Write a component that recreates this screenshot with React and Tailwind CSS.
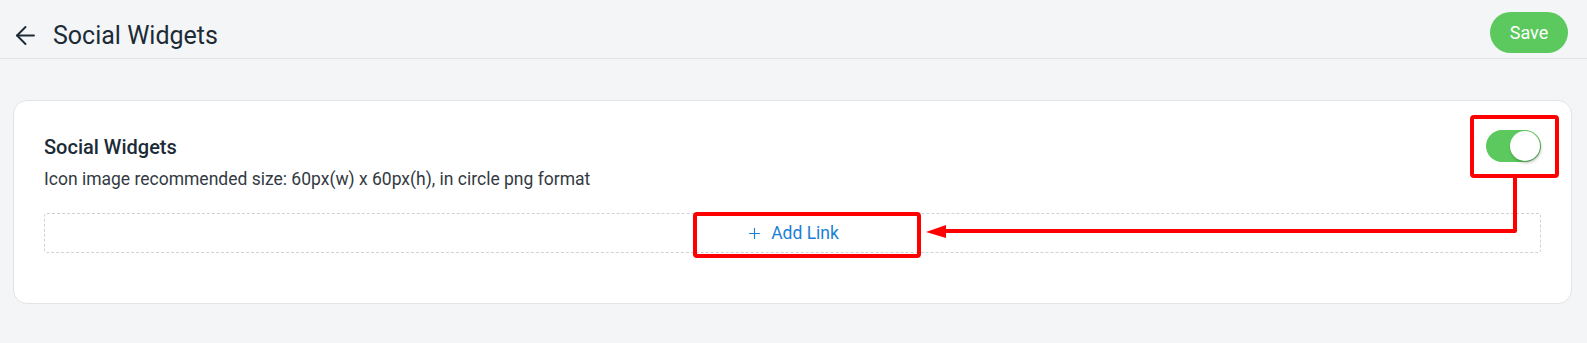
import { ArrowLeft, Plus } from 'lucide-react';

function Toggle({ on = true }) {
  return (
    <button
      className={`relative -mt-[5px] h-[32px] w-[55px] rounded-full ${on ? 'bg-[#5bc95d]' : 'bg-gray-300'}`}
    >
      <span className="absolute right-[1px] top-[1px] h-[30px] w-[30px] rounded-full bg-white shadow-[1px_2px_3px_rgba(0,0,0,0.25)]" />
    </button>
  );
}

export default function App() {
  return (
    <div
      className="relative h-[343px] w-full overflow-hidden bg-[#f4f5f7] text-[#1c2b36]"
      style={{ fontFamily: 'Roboto, "Liberation Sans", sans-serif' }}
    >
      {/* Top bar */}
      <div className="flex h-[59px] items-center justify-between border-b border-[#e2e4e7] pl-[11px] pr-[19px]">
        <div className="mt-[12px] flex items-center">
          <ArrowLeft className="h-[29px] w-[29px] text-[#1c2b36]" strokeWidth={1.6} />
          <h1 className="ml-[13px] text-[25px] leading-none text-[#1c2b36]">Social Widgets</h1>
        </div>
        <button className="mt-[6px] h-[41px] w-[78px] rounded-full bg-[#5bc95d] text-[18px] text-white">
          Save
        </button>
      </div>

      {/* Card */}
      <div className="ml-[13px] mr-[15px] mt-[41px] rounded-[14px] border border-[#e2e4e7] bg-white px-[30px] pb-[50px] pt-[34px]">
        <div className="flex items-start justify-between">
          <div>
            <div className="text-[20px] font-medium leading-[24px] text-[#1c2b36]">Social Widgets</div>
            <div className="mt-[8px] text-[17.5px] leading-[24px] text-[#333a42]">
              Icon image recommended size: 60px(w) x 60px(h), in circle png format
            </div>
          </div>
          <Toggle />
        </div>

        <button className="mt-[22px] flex h-[40px] w-full items-center justify-center gap-[8px] rounded-[3px] border border-dashed border-[#cfd2d6] text-[17.5px] text-[#1a7fd6]">
          <Plus className="h-[17px] w-[17px]" strokeWidth={1.6} />
          <span>Add Link</span>
        </button>
      </div>

      {/* Annotation overlay */}
      <svg className="pointer-events-none absolute left-0 top-0" width="1587" height="343" viewBox="0 0 1587 343">
        <rect x="1472" y="117" width="85" height="59" rx="2" fill="none" stroke="#ff0000" strokeWidth="4" />
        <rect x="695" y="214" width="224" height="42" rx="2" fill="none" stroke="#ff0000" strokeWidth="4" />
        <polyline points="1515,176 1515,231 942,231" fill="none" stroke="#ff0000" strokeWidth="4" strokeLinejoin="round" />
        <polygon points="926,232 946,225 946,238" fill="#ff0000" />
      </svg>
    </div>
  );
}
